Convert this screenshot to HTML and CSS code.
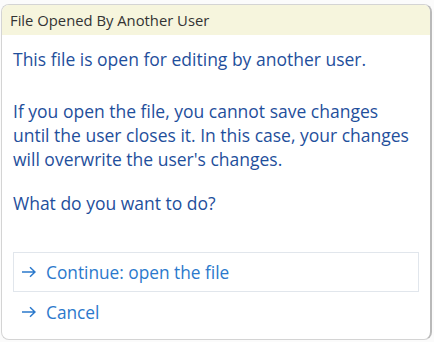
FILE: index.html
```html
<!DOCTYPE html>
<html lang="en">
<head>
    <meta charset="UTF-8">
    <meta name="viewport" content="width=device-width, initial-scale=1.0">
    <title>File Opened By Another User</title>
    <link rel="stylesheet" href="styles.css">
</head>
<body>
    <div class="dialog">
        <div class="titleBar">File Opened By Another User</div>
        <div class="content">
            <p class="message first">This file is open for editing by another user.</p>
            <p class="message second">If you open the file, you cannot save changes<br>until the user closes it. In this case, your changes<br>will overwrite the user's changes.</p>
            <p class="message">What do you want to do?</p>

            <div class="choices">
                <a href="#" class="choice selected">
                    <svg class="arrow" width="15" height="12" viewBox="0 0 15 12"><path d="M1 6H14M9 1.2L14 6L9 10.8" fill="none" stroke="currentColor" stroke-width="1.5"/></svg>
                    Continue: open the file
                </a>
                <a href="#" class="choice">
                    <svg class="arrow" width="15" height="12" viewBox="0 0 15 12"><path d="M1 6H14M9 1.2L14 6L9 10.8" fill="none" stroke="currentColor" stroke-width="1.5"/></svg>
                    Cancel
                </a>
            </div>
        </div>
    </div>
</body>
</html>
```

FILE: styles.css
```css
/* styles.css */
body {
    font-family: 'Open Sans', 'Noto Sans', sans-serif;
    background-color: #fbfbfb;
    margin: 0;
    padding: 4px 2px 2px 1px;
    box-sizing: border-box;
    height: 342px;
}

.dialog {
    height: 336px;
    box-sizing: border-box;
    background-color: #fff;
    border: 1px solid #d4d4d4;
    border-right: 2px solid #b9b9b9;
    border-radius: 8px;
    overflow: hidden;
}

.titleBar {
    height: 30px;
    line-height: 30px;
    padding-left: 8px;
    background-color: #f6f5dd;
    color: #333;
    font-size: 14.8px;
}

.content {
    padding: 12px 8px 0 11px;
}

.message {
    margin: 0;
    color: #1f4f9c;
    font-size: 17.5px;
    line-height: 24px;
    white-space: nowrap;
}

.message.first {
    margin-bottom: 28px;
}

.message.second {
    margin-bottom: 20px;
}

.choices {
    margin-top: 37px;
    margin-right: 3px;
}

.choice {
    display: flex;
    align-items: center;
    height: 38px;
    padding-left: 7px;
    color: #2b79cc;
    font-size: 17.3px;
    text-decoration: none;
    border: 1px solid transparent;
}

.choice.selected {
    border-color: #e1e6ec;
}

.arrow {
    margin-right: 10px;
    flex-shrink: 0;
}
```
